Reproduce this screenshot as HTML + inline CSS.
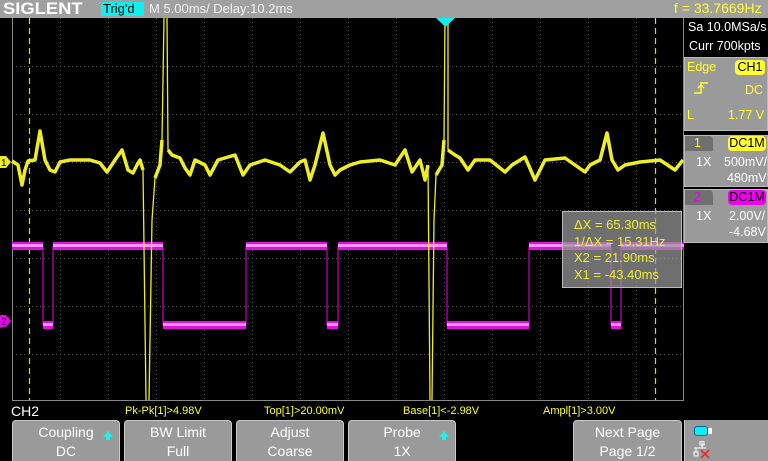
<!DOCTYPE html>
<html><head><meta charset="utf-8"><style>
*{margin:0;padding:0;box-sizing:border-box}
body{width:768px;height:461px;background:#000;position:relative;overflow:hidden;font-family:"Liberation Sans",sans-serif;font-size:12.5px}
.a{position:absolute;white-space:nowrap}
.top{left:0;top:0;width:768px;height:18px;background:#a0a0a0}
.btn{position:absolute;top:420px;height:41px;width:108px;background:#9a9a9a;border:1px solid #c8c8c8;border-bottom:none;border-radius:4px 4px 0 0;color:#fff;text-align:center;font-size:14px;line-height:19px;padding-top:2px}
.up{position:absolute;right:6px;top:10px;width:0;height:0;border-left:5px solid transparent;border-right:5px solid transparent;border-bottom:6px solid #2ee;}
.up:after{content:"";position:absolute;left:-2px;top:5px;width:4px;height:4px;background:#2ee}
.box{position:absolute;left:684px;width:84px;background:#9a9a9a;border:1px solid #bbb}
.y{color:#ff3}
</style></head><body>
<div class="a top"></div>
<div class="a" style="left:3px;top:0px;font-size:17px;line-height:18px;font-weight:bold;color:#fff;transform:scaleX(1.08);transform-origin:left">SIGLENT</div>
<div class="a" style="left:101px;top:2px;width:43px;height:14px;background:#1ee;color:#000;font-size:13px;line-height:14px;padding-left:2px">Trig'd</div>
<div class="a" style="left:149px;top:1px;color:#f4f4f4;font-size:13px">M 5.00ms/ Delay:10.2ms</div>
<div class="a y" style="left:674px;top:0px;font-size:14px;color:#ff3">f = 33.7669Hz</div>

<svg class="a" style="left:0;top:0" width="684" height="420" viewBox="0 0 684 420">
<g stroke="#555" stroke-width="1" stroke-dasharray="1 3">
<line x1="60.5" y1="18" x2="60.5" y2="400"/><line x1="108.5" y1="18" x2="108.5" y2="400"/><line x1="156.5" y1="18" x2="156.5" y2="400"/><line x1="204.5" y1="18" x2="204.5" y2="400"/><line x1="252.5" y1="18" x2="252.5" y2="400"/><line x1="300.5" y1="18" x2="300.5" y2="400"/><line x1="348.5" y1="18" x2="348.5" y2="400"/><line x1="396.5" y1="18" x2="396.5" y2="400"/><line x1="444.5" y1="18" x2="444.5" y2="400"/><line x1="492.5" y1="18" x2="492.5" y2="400"/><line x1="540.5" y1="18" x2="540.5" y2="400"/><line x1="588.5" y1="18" x2="588.5" y2="400"/><line x1="636.5" y1="18" x2="636.5" y2="400"/>
<line x1="12" y1="66.5" x2="683" y2="66.5"/><line x1="12" y1="114.5" x2="683" y2="114.5"/><line x1="12" y1="162.5" x2="683" y2="162.5"/><line x1="12" y1="210.5" x2="683" y2="210.5"/><line x1="12" y1="258.5" x2="683" y2="258.5"/><line x1="12" y1="306.5" x2="683" y2="306.5"/><line x1="12" y1="354.5" x2="683" y2="354.5"/>
</g>
<line x1="12.5" y1="18" x2="12.5" y2="401" stroke="#888"/>
<line x1="683.5" y1="18" x2="683.5" y2="401" stroke="#888"/>
<line x1="12" y1="400.5" x2="684" y2="400.5" stroke="#888"/>
<g stroke="#dd0" stroke-width="1.2" stroke-dasharray="6 4">
<line x1="29.5" y1="18" x2="29.5" y2="400"/><line x1="655.5" y1="18" x2="655.5" y2="400"/>
</g>
<g stroke="#a000a0" stroke-width="1.5">
<path d="M43 246V325M53 246V325M163 246V325M246 246V325M327 246V325M338 246V325M447 246V325M529 246V325M611 246V325M621 246V325"/>
</g>
<g fill="#e010e0">
<rect x="12" y="242" width="31" height="8"/><rect x="53" y="242" width="110" height="8"/><rect x="246" y="242" width="81" height="8"/><rect x="338" y="242" width="109" height="8"/><rect x="529" y="242" width="82" height="8"/><rect x="621" y="242" width="63" height="8"/>
<rect x="43" y="321" width="10" height="8"/><rect x="163" y="321" width="83" height="8"/><rect x="327" y="321" width="11" height="8"/><rect x="447" y="321" width="82" height="8"/><rect x="611" y="321" width="10" height="8"/>
</g>
<g fill="#ff90ff">
<rect x="12" y="244" width="31" height="3"/><rect x="53" y="244" width="110" height="3"/><rect x="246" y="244" width="81" height="3"/><rect x="338" y="244" width="109" height="3"/><rect x="529" y="244" width="82" height="3"/><rect x="621" y="244" width="63" height="3"/>
<rect x="43" y="323" width="10" height="3"/><rect x="163" y="323" width="83" height="3"/><rect x="327" y="323" width="11" height="3"/><rect x="447" y="323" width="82" height="3"/><rect x="611" y="323" width="10" height="3"/>
</g>
<path fill="none" stroke="#ee2" stroke-width="3.5" stroke-linejoin="round" d="M12 161L18 165L22 185L25 170L28 161L35 160L40 131L45 160L50 170L55 172L60 162L70 160L90 160L100 163L107 172L115 160L122 150L128 170L133 173L137 165L140 160L143 170M155 178L160 165L162 140M168 150L172 155L180 158L185 168L190 175L195 160L205 165L210 175L218 160L235 155L243 175L250 165L265 160L280 165L290 172L300 162L305 160L310 180L315 165L323 133L330 165L335 175L340 170L350 165L360 162L380 160L395 165L405 150L412 172L420 160L425 180L428 165M436 175L442 165L444 140M448 150L455 155L460 158L468 170L475 160L490 160L500 168L505 172L512 165L525 157L535 180L545 160L565 158L575 165L585 172L590 165L600 160L607 133L612 160L618 170L625 165L640 162L660 160L675 170L683 160"/>
<path fill="none" stroke="#ee2" stroke-width="1.3" d="M143 170L146 400M149 400L152 220L155 178M162 140L164 18M167 18L168 150M428 165L430 400M432 400L434 220L436 175M444 140L445 18M448 18L448 150"/>
<path d="M0 156H6L11 162L6 168H0Z" fill="#ee2"/><text x="1" y="166" font-size="10" fill="#000" font-family="Liberation Sans">1</text>
<path d="M0 315H6L11 321L6 327H0Z" fill="#e0e"/><text x="1" y="325" font-size="10" fill="#000" font-family="Liberation Sans">2</text>
<path d="M436 18H455L445.5 27Z" fill="#1ee"/>
<rect x="562.5" y="211.5" width="119" height="76" fill="#9a9a9a" fill-opacity="0.72" stroke="#bbb"/>
<g font-family="Liberation Sans" font-size="13" fill="#ee3">
<text x="574" y="229">ΔX = 65.30ms</text><text x="574" y="246">1/ΔX = 15.31Hz</text><text x="574" y="262">X2 = 21.90ms</text><text x="574" y="279">X1 = -43.40ms</text>
</g>
</svg>

<div class="a" style="left:688px;top:20px;color:#fff">Sa 10.0MSa/s</div>
<div class="a" style="left:689px;top:39px;color:#fff">Curr 700kpts</div>
<div class="box" style="top:57px;height:74px"></div>
<div class="a y" style="left:687px;top:60px">Edge</div>
<div class="a" style="left:735px;top:60px;width:30px;height:15px;background:#ff3;border-radius:4px;color:#000;text-align:center;line-height:15px">CH1</div>
<svg class="a" style="left:694px;top:82px" width="16" height="12"><path d="M0 11H7V1H14M4 6L7 3L10 6" stroke="#ff3" stroke-width="1.5" fill="none"/></svg>
<div class="a y" style="left:745px;top:83px">DC</div>
<div class="a y" style="left:687px;top:108px">L</div>
<div class="a y" style="left:728px;top:108px">1.77 V</div>

<div class="box" style="top:135px;height:52px"></div>
<div class="a" style="left:685px;top:136px;width:28px;height:15px;background:#707070;border-radius:0 4px 0 0"></div>
<div class="a y" style="left:694px;top:136px">1</div>
<div class="a" style="left:728px;top:136px;width:38px;height:15px;background:#ff3;border-radius:4px;color:#000;text-align:center;line-height:15px">DC1M</div>
<div class="a" style="left:696px;top:155px;color:#fff">1X</div>
<div class="a" style="left:724px;top:155px;color:#fff">500mV/</div>
<div class="a" style="left:727px;top:171px;color:#fff">480mV</div>

<div class="box" style="top:189px;height:54px"></div>
<div class="a" style="left:685px;top:190px;width:28px;height:15px;background:#707070;border-radius:0 4px 0 0"></div>
<div class="a" style="left:694px;top:190px;color:#e0e">2</div>
<div class="a" style="left:728px;top:190px;width:38px;height:15px;background:#e0e;border-radius:4px;color:#000;text-align:center;line-height:15px">DC1M</div>
<div class="a" style="left:696px;top:209px;color:#fff">1X</div>
<div class="a" style="left:729px;top:209px;color:#fff">2.00V/</div>
<div class="a" style="left:729px;top:225px;color:#fff">-4.68V</div>

<div class="a" style="left:11px;top:403px;color:#fff;font-size:14px">CH2</div>
<div class="a y" style="left:125px;top:405px;font-size:11px">Pk-Pk[1]&gt;4.98V</div>
<div class="a y" style="left:264px;top:405px;font-size:11px">Top[1]&gt;20.00mV</div>
<div class="a y" style="left:403px;top:405px;font-size:11px">Base[1]&lt;-2.98V</div>
<div class="a y" style="left:543px;top:405px;font-size:11px">Ampl[1]&gt;3.00V</div>

<div class="btn" style="left:12px">Coupling<br>DC<span class="up"></span></div>
<div class="btn" style="left:124px">BW Limit<br>Full</div>
<div class="btn" style="left:236px">Adjust<br>Coarse</div>
<div class="btn" style="left:348px">Probe<br>1X<span class="up"></span></div>
<div class="btn" style="left:573px;width:109px">Next Page<br>Page 1/2</div>
<div class="a" style="left:684px;top:420px;width:84px;height:41px;background:#9a9a9a;border-left:1px solid #c8c8c8"></div>
<div class="a" style="left:694px;top:426px;width:14px;height:10px;background:#1ee;border:1px solid #06a;border-radius:3px"></div>
<div class="a" style="left:708px;top:428px;width:4px;height:6px;background:#fff"></div>
<svg class="a" style="left:692px;top:441px" width="20" height="18"><path d="M10 0V4M2 7H14M4 7V11M10 4V7" stroke="#fff" fill="none"/><rect x="8" y="0" width="4" height="4" fill="none" stroke="#fff"/><rect x="2" y="11" width="4" height="4" fill="none" stroke="#fff"/><path d="M9 9L17 17M17 9L9 17" stroke="#e22" stroke-width="1.5"/></svg>
</body></html>
